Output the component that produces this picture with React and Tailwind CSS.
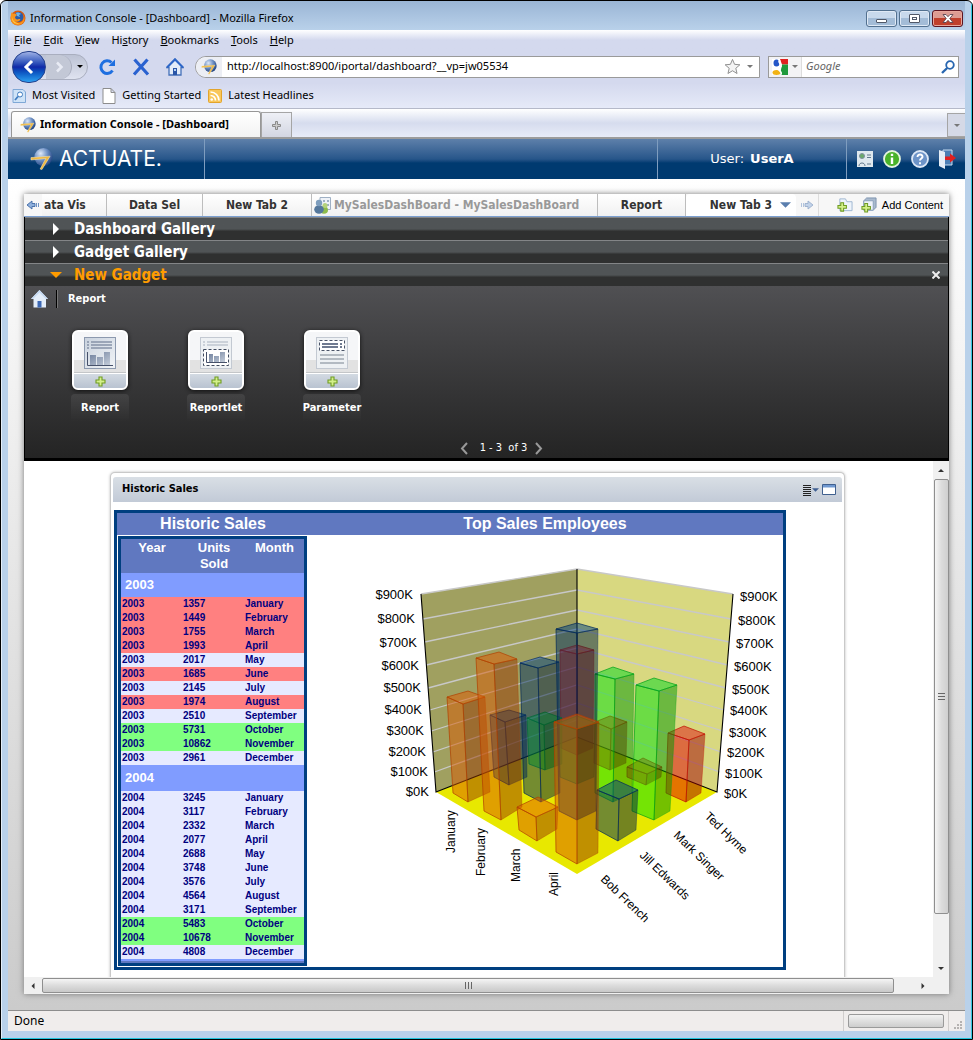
import React, { useState } from "react";

const CHROME_FONT = "font-['Noto_Sans',sans-serif]";
const APP_FONT = "font-['DejaVu_Sans_Condensed','DejaVu_Sans',sans-serif]";

const LOW = "bg-[#ff8080]";
const HIGH = "bg-[#80ff80]";
const NORMAL = "bg-[#e6eaff]";

const SALES = [
  {
    year: 2003,
    height: "h-[24px]",
    rows: [
      [1357, "January"],
      [1449, "February"],
      [1755, "March"],
      [1993, "April"],
      [2017, "May"],
      [1685, "June"],
      [2145, "July"],
      [1974, "August"],
      [2510, "September"],
      [5731, "October"],
      [10862, "November"],
      [2961, "December"],
    ],
  },
  {
    year: 2004,
    height: "h-[26px]",
    rows: [
      [3245, "January"],
      [3117, "February"],
      [2332, "March"],
      [2077, "April"],
      [2688, "May"],
      [3748, "June"],
      [3576, "July"],
      [4564, "August"],
      [3171, "September"],
      [5483, "October"],
      [10678, "November"],
      [4808, "December"],
    ],
  },
];

const rowColor = (units) => {
  if (units < 2000) return LOW;
  if (units > 5000) return HIGH;
  return NORMAL;
};

const PALETTE = {
  red: { left: "#e00000", right: "#a00000", top: "#e01010", line: "#c01000" },
  green: { left: "#00e00a", right: "#009800", top: "#00d820", line: "#00a018" },
  blue: { left: "#003060", right: "#002040", top: "#004080", line: "#002858" },
  orange: { left: "#d85800", right: "#983800", top: "#e05800", line: "#b04000" },
};

// Corners of each column: left, back, right and front of the lid,
// then left, front and right of the base. Ordered from back to front.
const COLUMNS = [
  ["red", 560, 650, 577, 645, 594, 650, 577, 654, 561, 748, 577, 755, 593, 748],
  ["red", 595, 722, 610, 716, 627, 722, 611, 729, 594, 763, 610, 770, 626, 763],
  ["red", 627, 767, 643, 758, 662, 767, 647, 774, 627, 777, 646, 785, 661, 777],
  ["red", 668, 733, 684, 726, 705, 734, 689, 740, 666, 793, 686, 802, 701, 793],
  ["green", 527, 718, 545, 712, 562, 718, 544, 725, 529, 764, 545, 770, 562, 764],
  ["green", 558, 723, 577, 716, 596, 723, 577, 730, 560, 777, 577, 784, 594, 777],
  ["green", 595, 674, 613, 667, 634, 674, 615, 679, 595, 793, 613, 802, 632, 793],
  ["green", 636, 685, 654, 678, 677, 685, 659, 691, 632, 811, 654, 820, 670, 811],
  ["blue", 490, 715, 509, 710, 526, 715, 505, 722, 494, 777, 509, 785, 527, 777],
  ["blue", 520, 663, 540, 657, 559, 662, 538, 668, 524, 793, 541, 802, 560, 793],
  ["blue", 556, 629, 577, 623, 598, 629, 577, 633, 559, 811, 577, 820, 596, 811],
  ["blue", 597, 790, 616, 780, 638, 790, 619, 799, 596, 829, 618, 841, 636, 830],
  ["orange", 447, 697, 468, 691, 485, 697, 463, 704, 453, 793, 468, 802, 490, 792],
  ["orange", 476, 658, 499, 652, 517, 659, 494, 664, 484, 811, 501, 820, 522, 807],
  ["orange", 517, 807, 538, 797, 558, 807, 536, 817, 519, 830, 537, 841, 557, 829],
  ["orange", 554, 722, 577, 714, 599, 722, 577, 729, 556, 852, 577, 864, 598, 853],
];

// value, left edge y, corner y, left label x/y, right label x/y
const SCALE = [
  ["$900K", 594, 569, 413, 599, 740, 601],
  ["$800K", 619, 590, 415, 623, 738, 625],
  ["$700K", 642, 610, 417, 647, 736, 648],
  ["$600K", 665, 629, 419, 670, 734, 671],
  ["$500K", 688, 648, 421, 692, 732, 694],
  ["$400K", 710, 667, 422, 714, 730, 715],
  ["$300K", 731, 685, 424, 735, 729, 737],
  ["$200K", 752, 703, 426, 756, 727, 757],
  ["$100K", 772, 720, 428, 776, 725, 778],
  ["$0K", 792, 737, 429, 796, 724, 798],
];

const MONTHS = [
  ["January", 455, 853],
  ["February", 485, 876],
  ["March", 520, 882],
  ["April", 558, 896],
];

const PEOPLE = [
  ["Ted Hyme", 704, 817],
  ["Mark Singer", 673, 836],
  ["Jill Edwards", 639, 856],
  ["Bob French", 600, 880],
];

const Column = ({ data }) => {
  const [name, ...p] = data;
  const c = PALETTE[name];
  const at = (i) => `${p[i * 2]},${p[i * 2 + 1]}`;
  return (
    <g stroke={c.line} strokeOpacity="0.7" strokeLinejoin="round" fillOpacity="0.5">
      <polygon points={`${at(0)} ${at(3)} ${at(5)} ${at(4)}`} fill={c.left} />
      <polygon points={`${at(3)} ${at(2)} ${at(6)} ${at(5)}`} fill={c.right} strokeOpacity="0.35" />
      <polygon points={`${at(0)} ${at(1)} ${at(2)} ${at(3)}`} fill={c.top} />
    </g>
  );
};

const SalesChart = () => (
  <svg
    viewBox="307 536 476 431"
    className="block h-[431px] w-[476px] shrink-0"
    role="img"
    aria-label="Top Sales Employees"
    fontFamily="Liberation Sans, Arial, sans-serif"
  >
    <polygon points="421,594 577,569 577,737 436,792" fill="#a0a060" />
    <polygon points="577,569 733,594 717,792 577,737" fill="#d8d880" />
    <polygon points="436,792 577,737 717,792 577,874" fill="#e8e800" />
    {SCALE.map(([label, y, cy], i) => {
      const dx = ((y - 594) / 198) * 15;
      return (
        label !== "$0K" && (
          <polyline
            key={i}
            points={`${421 + dx},${y} 577,${cy} ${733 - dx},${y}`}
            fill="none"
            stroke="#c8c8c8"
            strokeWidth="1.3"
          />
        )
      );
    })}
    <path d="M421 594 436 792 577 737 717 792 733 594M577 569V737" fill="none" stroke="#000" strokeWidth="1.1" />
    {COLUMNS.map((col, i) => (
      <Column key={i} data={col} />
    ))}
    <g fontSize="13">
      {SCALE.map(([label, , , lx, ly, rx, ry]) => (
        <g key={label}>
          <text x={lx} y={ly} textAnchor="end">{label}</text>
          <text x={rx} y={ry}>{label}</text>
        </g>
      ))}
    </g>
    <g fontSize="12">
      {PEOPLE.map(([label, x, y]) => (
        <text key={label} transform={`translate(${x} ${y}) rotate(44)`}>{label}</text>
      ))}
      {MONTHS.map(([label, x, y]) => (
        <text key={label} transform={`translate(${x} ${y}) rotate(-90)`}>{label}</text>
      ))}
    </g>
  </svg>
);

const SalesTable = () => (
  <table className="w-[189px] shrink-0 table-fixed border-separate border-spacing-0 border-[3px] border-[#003f80] text-left font-bold">
    <colgroup>
      <col className="w-[62px]" />
      <col className="w-[62px]" />
      <col />
    </colgroup>
    <thead>
      <tr className="h-[34px] bg-[#6078c0] text-center align-top text-[13px] leading-[16px] text-white">
        <th className="p-0 pt-px">Year</th>
        <th className="p-0 pt-px">Units<br />Sold</th>
        <th className="p-0 pt-px">Month</th>
      </tr>
    </thead>
    {SALES.map((group) => (
      <tbody key={group.year} className="text-[10px] leading-[14px] text-[#000080]">
        <tr className={`${group.height} bg-[#809cff] text-[13px] text-white`}>
          <td colSpan={3} className="p-0 pl-1">{group.year}</td>
        </tr>
        {group.rows.map(([units, month]) => (
          <tr key={month} className={`h-[14px] ${rowColor(units)}`}>
            <td className="p-0 pl-px">{group.year}</td>
            <td className="p-0">{units}</td>
            <td className="p-0">{month}</td>
          </tr>
        ))}
      </tbody>
    ))}
    <tfoot>
      <tr className="h-[4px]">
        <td colSpan={3} className="border-b-2 border-[#6078c0] bg-[#809cff] p-0" />
      </tr>
    </tfoot>
  </table>
);

const Globe = ({ className }) => (
  <svg viewBox="0 0 24 24" className={className} aria-hidden="true">
    <defs>
      <radialGradient id="globe" cx="0.35" cy="0.3" r="0.75">
        <stop offset="0" stopColor="#dfe9f8" />
        <stop offset="0.5" stopColor="#6d8fc4" />
        <stop offset="1" stopColor="#1d3f7c" />
      </radialGradient>
    </defs>
    <circle cx="14" cy="10" r="9.5" fill="url(#globe)" />
    <path d="M1 10.500 21 9 12.500 23 10.500 22.500 16.500 11.500 1 13z" fill="#f0b840" stroke="#fff3c8" strokeWidth="0.500" />
  </svg>
);

const FirefoxIcon = () => (
  <svg viewBox="0 0 16 16" className="h-4 w-4" aria-hidden="true">
    <circle cx="8" cy="8" r="7.500" fill="#d9580d" />
    <circle cx="8.500" cy="7" r="5" fill="#2d5da8" />
    <path d="M6 3c2-1 4 0 5 1l-2 1 1 2-3-1z" fill="#6fb4e8" />
    <path d="M1 4c0-1 1-2 1-2l1 2c2-1 3 0 4 1L5 7c0 2 2 3 4 2 1 0 2 0 1 1-1 2-4 2-5 1 2 3 7 2 8-1 1-2 1-4 0-6 3 4 2 11-5 11S0 10 1 4z" fill="#f7941e" />
    <path d="M2 6c0 5 4 8 8 7-3 2-9 0-8-7z" fill="#ffd24a" />
  </svg>
);

const Caret = ({ className }) => (
  <svg viewBox="0 0 8 4" className={className} aria-hidden="true">
    <path d="M0 0H8L4 4z" fill="currentColor" />
  </svg>
);

const Plus = () => (
  <path d="M4 1H7V4H10V7H7V10H4V7H1V4H4z" fill="#d4f08a" stroke="#6f9c22" strokeWidth="1.100" />
);

const HomeIcon = ({ className }) => (
  <svg viewBox="0 0 18 18" className={className} aria-hidden="true">
    <path d="M9 1 17 9.500H15V17H3V9.500H1z" fill="#e4edf9" stroke="#4470b8" strokeWidth="1.300" />
    <path d="M1 9.500 9 1.500 17 9.500" fill="none" stroke="#2c66c8" strokeWidth="2" />
    <path d="M7 10h4v7H7z" fill="#2a56a8" />
    <path d="M8 11h2v2H8z" fill="#b9d4f4" />
  </svg>
);

const TitleBar = () => (
  <header className="flex h-[29px] shrink-0 items-center bg-linear-to-b from-[#9ab5d5] to-[#b9d1ea] pt-[5px] pr-[2px] pl-[2px]">
    <div className="flex items-center gap-1">
      <FirefoxIcon />
      <h1 className="text-[11px]">Information Console - [Dashboard] - Mozilla Firefox</h1>
    </div>
    <div className="ml-auto flex gap-[2px]">
      <button aria-label="Minimize" className="flex h-[17px] w-[31px] items-center justify-center rounded-[3px] border border-[#52708f] bg-linear-to-b from-[#c8d9ec] from-50% to-[#a3bcd7] to-50% shadow-[inset_0_0_0_1px_#dfe9f5]">
        <span className="mt-[5px] h-[4px] w-[11px] rounded-[1px] border border-[#505868] bg-white" />
      </button>
      <button aria-label="Maximize" className="flex h-[17px] w-[31px] items-center justify-center rounded-[3px] border border-[#52708f] bg-linear-to-b from-[#c8d9ec] from-50% to-[#a3bcd7] to-50% shadow-[inset_0_0_0_1px_#dfe9f5]">
        <span className="flex h-[9px] w-[11px] items-center justify-center rounded-[1px] border border-[#505868] bg-white">
          <span className="h-[3px] w-[5px] border border-[#505868]" />
        </span>
      </button>
      <button aria-label="Close" className="flex h-[17px] w-[31px] items-center justify-center rounded-[3px] border border-[#5c1522] bg-linear-to-b from-[#dd9c93] from-50% to-[#c0402c] to-50% shadow-[inset_0_0_0_1px_#e8a79c]">
        <svg viewBox="0 0 12 9" className="h-[9px] w-[12px]" aria-hidden="true">
          <path d="M1 .5H4L6 2.700 8 .5h3L7.800 4.500 11 8.500H8L6 6.300 4 8.500H1L4.200 4.500z" fill="#fff" stroke="#5a4550" strokeWidth="0.900" />
        </svg>
      </button>
    </div>
  </header>
);

const MENU = [
  ["", "F", "ile"],
  ["", "E", "dit"],
  ["", "V", "iew"],
  ["Hi", "s", "tory"],
  ["", "B", "ookmarks"],
  ["", "T", "ools"],
  ["", "H", "elp"],
];

const MenuBar = () => (
  <nav className="flex h-[20px] items-center gap-3 bg-linear-to-b from-white to-[#d4d9ee] to-50% pl-[6px] text-[11px]">
    {MENU.map(([pre, key, post]) => (
      <button key={key + post}>
        {pre}
        <u>{key}</u>
        {post}
      </button>
    ))}
  </nav>
);

const NavBar = () => {
  const [url, setUrl] = useState("http://localhost:8900/iportal/dashboard?__vp=jw05534");

  return (
    <div className="flex h-[33px] items-center pr-[6px] pl-[4px]">
      <div className="flex h-[26px] w-[76px] items-center rounded-full border border-[#a9aebf] bg-linear-to-b from-[#bcc2d4] to-[#dfe3f0]">
        <button aria-label="Back" className="-ml-px flex h-[32px] w-[34px] shrink-0 items-center justify-center rounded-full border border-[#24408c] bg-linear-to-b from-[#9fb0e4] via-[#1027a8] to-[#2fa0f0]">
          <svg viewBox="0 0 16 16" className="h-4 w-4" aria-hidden="true">
            <path d="M11 2 5 8l6 6" fill="none" stroke="#fff" strokeWidth="3" />
          </svg>
        </button>
        <button aria-label="Forward" className="flex h-[24px] w-[26px] items-center justify-center rounded-r-xl border-r border-[#a9aebf] bg-[#c3c8d6]">
          <svg viewBox="0 0 12 12" className="h-[12px] w-[12px]" aria-hidden="true">
            <path d="M4 1.500 8.500 6 4 10.500" fill="none" stroke="#e8ebf4" strokeWidth="2.500" />
          </svg>
        </button>
        <button aria-label="Recent pages" className="flex h-full flex-1 items-center justify-center">
          <Caret className="h-[3px] w-[6px] text-black" />
        </button>
      </div>
      <div className="ml-[10px] flex items-center gap-[16px]">
        <button aria-label="Reload">
          <svg viewBox="0 0 18 18" className="h-[18px] w-[18px]" aria-hidden="true">
            <path d="M14.500 12.500A6.300 6.300 0 1 1 13.500 4.500" fill="none" stroke="#1e6fe0" strokeWidth="3" />
            <path d="M17 1.500V8H10.500z" fill="#1e6fe0" />
          </svg>
        </button>
        <button aria-label="Stop">
          <svg viewBox="0 0 18 18" className="h-[18px] w-[18px]" aria-hidden="true">
            <path d="M2.500 1.500 16 16.500M15.500 1.500 2 16.500" stroke="#2a62d0" strokeWidth="3.200" />
          </svg>
        </button>
        <button aria-label="Home">
          <HomeIcon className="h-[18px] w-[18px]" />
        </button>
      </div>
      <div className="ml-[11px] flex h-[22px] flex-1 items-center rounded-l-full border border-[#9a9a9a] bg-white">
        <span className="flex h-full w-[26px] items-center justify-center rounded-l-full bg-[#eceef4]">
          <Globe className="h-[16px] w-[16px]" />
        </span>
        <input
          aria-label="Location"
          value={url}
          onChange={(e) => setUrl(e.target.value)}
          className="min-w-0 flex-1 pl-[5px] text-[11px] outline-none"
        />
        <button aria-label="Bookmark this page">
          <svg viewBox="0 0 18 18" className="h-[17px] w-[17px]" aria-hidden="true">
            <path d="M9 1.500 11.200 6.700 16.800 7.200 12.500 10.900 13.800 16.400 9 13.500 4.200 16.400 5.500 10.900 1.200 7.200 6.800 6.700z" fill="#f4f4f4" stroke="#8a8a8a" />
          </svg>
        </button>
        <button aria-label="Show history" className="flex w-[18px] justify-center">
          <Caret className="h-[3px] w-[6px] text-[#777]" />
        </button>
      </div>
      <div className="ml-[8px] flex h-[22px] w-[191px] items-center border border-[#9a9a9a] bg-white">
        <button aria-label="Search engine" className="flex h-full w-[33px] items-center gap-1 border-r border-[#ddd] bg-[#f3f3f5] pl-[3px]">
          <svg viewBox="0 0 16 16" className="h-4 w-4" aria-hidden="true">
            <path d="M0 0h16v16H0z" fill="#fff" />
            <path d="M8 0h8v5.500H10z" fill="#e02020" />
            <path d="M10 5.500h6V16H8z" fill="#1e9a3c" />
            <ellipse cx="4.500" cy="4" rx="3" ry="3.500" fill="#2456c8" />
            <ellipse cx="4.500" cy="13.500" rx="4" ry="2.500" fill="#f2b314" />
            <path d="M8 1C5 3 10 5 9 7.500S5 9 7 11s3 3 1.500 5" stroke="#fff" strokeWidth="1.600" fill="none" />
          </svg>
          <Caret className="h-[3px] w-[6px] text-[#777]" />
        </button>
        <input
          aria-label="Search"
          placeholder="Google"
          className="min-w-0 flex-1 pl-[4px] text-[11px] italic outline-none placeholder:text-[#666]"
        />
        <button aria-label="Go" className="pr-[3px]">
          <svg viewBox="0 0 14 14" className="h-[14px] w-[14px]" aria-hidden="true">
            <circle cx="9" cy="5" r="3.800" fill="#fff" stroke="#2866b0" strokeWidth="1.800" />
            <path d="M6.200 8 1 13" stroke="#2866b0" strokeWidth="2.400" />
          </svg>
        </button>
      </div>
    </div>
  );
};

const Bookmarks = () => (
  <div className="flex h-[26px] items-center gap-[7px] border-b border-[#b5b9c9] bg-linear-to-b from-[#d4d9ee] to-[#e6eaf8] pl-[4px] text-[11px]">
    <a href="#most" className="flex items-center gap-[6px]">
      <svg viewBox="0 0 14 14" className="h-[14px] w-[14px]" aria-hidden="true">
        <path d="M1 .5H11L13.500 3V13.500H1z" fill="#cfe3f7" stroke="#7fa8d6" />
        <circle cx="8" cy="5.500" r="2.500" fill="#fff" stroke="#3f7cc0" />
        <path d="M6 7.500 3 11" stroke="#3f7cc0" strokeWidth="1.800" />
      </svg>
      Most Visited
    </a>
    <a href="#start" className="flex items-center gap-[6px]">
      <svg viewBox="0 0 14 16" className="h-[16px] w-[14px]" aria-hidden="true">
        <path d="M1 .5H9L13 4.500V15.500H1zM9 .5V4.500H13" fill="#fff" stroke="#8d8d8d" />
      </svg>
      Getting Started
    </a>
    <a href="#news" className="flex items-center gap-[6px]">
      <svg viewBox="0 0 14 14" className="h-[14px] w-[14px]" aria-hidden="true">
        <rect x="0.5" y="0.5" width="13" height="13" rx="1" fill="#f9c75a" stroke="#e2a42c" />
        <circle cx="3.700" cy="10.500" r="1.300" fill="#fff" />
        <path d="M2.500 6.500a5 5 0 0 1 5 5M2.500 3a8.500 8.500 0 0 1 8.500 8.500" fill="none" stroke="#fff" strokeWidth="1.700" />
      </svg>
      Latest Headlines
    </a>
  </div>
);

const BrowserTabs = () => (
  <div className="flex h-[30px] items-end border-b-2 border-[#9c9c9c] bg-linear-to-b from-white via-[#d6dcee] to-[#e8ecf8] pl-[3px]">
    <button className="flex h-[26px] w-[250px] items-center gap-1 rounded-t-[3px] border border-b-0 border-[#979797] bg-linear-to-b from-white to-[#f2f2f2] pl-[8px] text-[11px] font-bold">
      <Globe className="h-[16px] w-[16px]" />
      Information Console - [Dashboard]
    </button>
    <button aria-label="Open a new tab" className="flex h-[25px] w-[31px] items-center justify-center border border-b-0 border-[#a5a5a5] bg-linear-to-b from-[#eef0f6] to-[#d3d6e2]">
      <svg viewBox="0 0 9 9" className="h-[9px] w-[9px]" aria-hidden="true">
        <path d="M3.500.5h2v3h3v2h-3v3h-2v-3h-3v-2h3z" fill="#ccc" stroke="#8a8a8a" />
      </svg>
    </button>
    <button aria-label="List all tabs" className="ml-auto flex h-[24px] w-[18px] items-center justify-center border border-r-0 border-[#a5a5a5] bg-[#d5d9e6]">
      <Caret className="h-[3px] w-[6px] text-[#777]" />
    </button>
  </div>
);

const AppHeader = () => (
  <header className="flex h-[40px] shrink-0 bg-linear-to-b from-[#5e80aa] via-[#27568a] via-50% to-[#003a70] to-60% text-[13px] text-white">
    <div className="flex w-[197px] items-center gap-[6px] border-r border-[#7f9dbf] pl-[22px]">
      <Globe className="h-[26px] w-[23px]" />
      <span className="font-['Inter',sans-serif] text-[21px]">ACTUATE.</span>
    </div>
    <div className="flex-1" />
    <div className="flex w-[190px] items-center justify-center gap-[6px] border-x border-[#7f9dbf] font-['DejaVu_Sans',sans-serif]">
      <span>User:</span>
      <b>UserA</b>
    </div>
    <div className="flex w-[118px] items-center justify-between pr-[9px] pl-[10px]">
      <button aria-label="Profile">
        <svg viewBox="0 0 16 16" className="h-[16px] w-[16px]" aria-hidden="true">
          <path d="M0 0h16v16H0z" fill="#dfe8ee" />
          <circle cx="5" cy="5" r="2.500" fill="#6aa86a" stroke="#8090a0" />
          <path d="M10 4h4M10 6.500h4M2 15c0-4 6-4 6 0M10 13h4" stroke="#62788c" fill="none" />
        </svg>
      </button>
      <button aria-label="Information">
        <svg viewBox="0 0 18 18" className="h-[18px] w-[18px]" aria-hidden="true">
          <circle cx="9" cy="9" r="8" fill="#49b22a" stroke="#e4f4de" strokeWidth="1.800" />
          <path d="M9 7.500V14M9 3.800v2.200" stroke="#fff" strokeWidth="2.400" fill="none" />
        </svg>
      </button>
      <button aria-label="Help">
        <svg viewBox="0 0 18 18" className="h-[18px] w-[18px]" aria-hidden="true">
          <circle cx="9" cy="9" r="8" fill="#6d94c8" stroke="#dde8f6" strokeWidth="1.800" />
          <path d="M6.500 7c0-3.500 5.500-3 5 0-.2 1.500-2.500 1.500-2.500 3.500M9 12.300v2" stroke="#fff" strokeWidth="1.900" fill="none" />
        </svg>
      </button>
      <button aria-label="Log out">
        <svg viewBox="0 0 17 20" className="h-[20px] w-[17px]" aria-hidden="true">
          <path d="M4 1h9v15H4z" fill="#4d7fb4" stroke="#c7dcf0" />
          <path d="M0 1 6 3V20L0 17z" fill="#e6eef6" />
          <path d="M6 7.500h5V4.500L17 9l-6 4.500V11H6z" fill="#e02020" />
        </svg>
      </button>
    </div>
  </header>
);

const BlockArrow = ({ className }) => (
  <svg viewBox="0 0 14 10" className={className} aria-hidden="true">
    <path d="M6 3.500V1L1 5l5 4V6.500h3v-3z" fill="#8fb0dc" stroke="#3f69a4" strokeWidth="0.900" />
    <path d="M10.500 3v4M12.500 3v4" stroke="#6f92c4" />
  </svg>
);

const TAB_CLASS = "flex items-center border-r border-[#bdbdbd] bg-linear-to-b from-white to-[#f1f1f1] whitespace-nowrap";

const DashboardTabs = () => (
  <div className="flex h-[23px] shrink-0 border-b border-[#7b9fd0] bg-[#f7f7f7] text-[12px] font-bold text-[#333]">
    <button aria-label="Scroll tabs left" className="flex w-[18px] items-center justify-center">
      <BlockArrow className="h-[10px] w-[14px]" />
    </button>
    <button className={`${TAB_CLASS} w-[65px] overflow-hidden pl-[2px]`}>ata Vis</button>
    <button className={`${TAB_CLASS} w-[96px] justify-center`}>Data Sel</button>
    <button className={`${TAB_CLASS} w-[109px] justify-center`}>New Tab 2</button>
    <button className={`${TAB_CLASS} w-[286px] gap-[3px] pl-[2px] text-[#999]`}>
      <svg viewBox="0 0 17 17" className="h-[17px] w-[17px]" aria-hidden="true">
        <path d="M6 .5h10.500v12H6z" fill="#eef2f8" stroke="#9fb0c4" />
        <path d="M9 3h2v2H9zM13 3h2v2h-2zM13 7h2v2h-2z" fill="#9fb0c4" />
        <ellipse cx="10" cy="13" rx="4" ry="3.800" fill="#8dbb4a" />
        <circle cx="11" cy="8.500" r="2.500" fill="#b5d27c" />
        <ellipse cx="5" cy="12.500" rx="4.800" ry="4.200" fill="#55789c" />
        <circle cx="5" cy="6" r="3.200" fill="#7d9dbd" />
      </svg>
      MySalesDashBoard - MySalesDashBoard
    </button>
    <button className={`${TAB_CLASS} w-[88px] justify-center`}>Report</button>
    <button className="flex w-[110px] items-center justify-end gap-2 rounded-t-[4px] bg-white pr-[5px] whitespace-nowrap">
      New Tab 3
      <Caret className="h-[6px] w-[11px] text-[#5b7fae]" />
    </button>
    <button aria-label="Scroll tabs right" className="flex w-[23px] items-center justify-center border-r border-[#ddd]">
      <BlockArrow className="h-[10px] w-[14px] rotate-180 opacity-50" />
    </button>
    <div className="flex flex-1 items-center justify-end gap-2 pr-[6px] font-normal text-black">
      <button aria-label="Add tab">
        <svg viewBox="0 0 17 17" className="h-[16px] w-[16px]" aria-hidden="true">
          <path d="M3 2h6l1.500 3h5.500v9.500H3z" fill="#eef4fb" stroke="#9db4d0" />
          <g transform="translate(0 5)"><Plus /></g>
        </svg>
      </button>
      <button className="flex items-center gap-[5px] font-['Liberation_Sans',Arial,sans-serif] text-[11px]">
        <svg viewBox="0 0 17 17" className="h-[16px] w-[16px]" aria-hidden="true">
          <path d="M3 4 6 1h10v10l-3 3H3z" fill="#a9bace" stroke="#7d92ae" />
          <path d="M3 4h10v10H3z" fill="#eef3f9" stroke="#8ba0bb" />
          <g transform="translate(0 6)"><Plus /></g>
        </svg>
        Add Content
      </button>
    </div>
  </div>
);

const GalleryRow = ({ title, open, onClick }) => (
  <div className="flex h-[23px] items-center border-t border-[#838587] bg-linear-to-b from-[#505456] from-50% to-[#2f3030] to-60% pr-[8px] pl-[25px]">
    <button onClick={onClick} aria-expanded={open} className={`flex items-center text-[15px] font-bold ${open ? "text-[#ff9c00]" : "text-white"}`}>
      <span className="flex w-[24px] justify-start">
        <svg viewBox="0 0 12 12" className="h-[12px] w-[12px]" aria-hidden="true">
          <path d={open ? "M0 3H12L6 9z" : "M3 0 9 6 3 12z"} fill="currentColor" />
        </svg>
      </span>
      {title}
    </button>
    {open && (
      <button aria-label="Close" className="ml-auto">
        <svg viewBox="0 0 8 8" className="block h-[8px] w-[8px]" aria-hidden="true">
          <path d="M0.500 0.500 7.500 7.500M7.500 0.500 0.500 7.500" stroke="#eee" strokeWidth="2" />
        </svg>
      </button>
    )}
  </div>
);

const ReportArt = ({ kind }) => (
  <svg viewBox="0 0 32 32" className="h-8 w-8" aria-hidden="true">
    <defs>
      <linearGradient id="paper" x1="0" y1="0" x2="1" y2="1">
        <stop offset="0" stopColor="#c9d2de" />
        <stop offset="1" stopColor="#f1f4f7" />
      </linearGradient>
      <linearGradient id="bar" x1="0" y1="0" x2="1" y2="1">
        <stop offset="0" stopColor="#6e7f9c" />
        <stop offset="1" stopColor="#c3ccd9" />
      </linearGradient>
    </defs>
    <rect x="0.5" y="0.5" width="31" height="31" fill={kind === "Report" ? "url(#paper)" : "#eef1f4"} stroke={kind === "Report" ? "#8c99ae" : "#c3c9d2"} />
    {kind === "Parameter" && (
      <>
        <path d="M3.500 3.500h25v10h-25z" fill="#fff" stroke="#4a5468" strokeDasharray="3 2" />
        <path d="M6 7h16M6 10h16" stroke="#6f7a90" strokeWidth="2" />
        <path d="M24 7h2M24 10h2" stroke="#6f7a90" strokeWidth="2" />
        <path d="M4 18h24M4 22h24M4 26h24" stroke="#b3bac2" strokeWidth="2" />
      </>
    )}
    {kind === "Report" && (
      <>
        <path d="M3 5h2M3 8h2M3 11h2M7 5h21M7 8h21M7 11h21" stroke="#8793a8" strokeWidth="1.500" />
        <path d="M6 18h6v10H6zM13 20h6v8h-6zM20 15h6v13h-6z" fill="url(#bar)" />
        <path d="M3.500 15V28.500H29" fill="none" stroke="#46516a" />
      </>
    )}
    {kind === "Reportlet" && (
      <>
        <path d="M3 5h2M3 8h2M7 5h21M7 8h21" stroke="#c0c6cf" strokeWidth="1.500" />
        <path d="M3.500 12.500h25v16h-25z" fill="#fff" stroke="#3f4a5e" strokeDasharray="3 2" />
        <path d="M9 17h4v8H9zM14 19h5v6h-5zM20 15h5v10h-5z" fill="url(#bar)" />
        <path d="M6.500 15V25.500H27" fill="none" stroke="#46516a" />
      </>
    )}
  </svg>
);

const GadgetCard = ({ name }) => (
  <button className="flex w-[56px] flex-col items-center text-[11px] font-bold text-white">
    <span className="flex h-[60px] w-[56px] flex-col overflow-hidden rounded-[6px] border-2 border-white bg-linear-to-b from-[#f5f6f8] from-50% to-[#e2e2e2] to-50% shadow-[0_1px_4px_#111]">
      <span className="flex h-[41px] items-center justify-center">
        <ReportArt kind={name} />
      </span>
      <span className="flex flex-1 items-center justify-center border-t border-white bg-linear-to-b from-[#d3dae2] to-[#b9c3d1] outline-1 outline-[#c4c6c8]">
        <svg viewBox="0 0 11 11" className="h-[11px] w-[11px]" aria-hidden="true"><Plus /></svg>
      </span>
    </span>
    <span className="mt-[4px] flex h-[28px] w-[58px] items-center justify-center rounded-t-[4px] bg-linear-to-b from-white/8 to-transparent">
      {name}
    </span>
  </button>
);

const Gallery = () => {
  const [open, setOpen] = useState("New Gadget");

  return (
    <section className="shrink-0 border-x border-b-[3px] border-black bg-[#252525]">
      {["Dashboard Gallery", "Gadget Gallery", "New Gadget"].map((title) => (
        <GalleryRow key={title} title={title} open={open === title} onClick={() => setOpen(title)} />
      ))}
      <div className="bg-linear-to-b from-[#505053] to-[#242424] text-[11px] text-white">
        <div className="flex h-[26px] items-center font-bold">
          <button aria-label="Gallery home" className="ml-[6px]">
            <svg viewBox="0 0 17 18" className="block h-[18px] w-[17px]" aria-hidden="true">
              <path d="M8.500 0 17 9H15V17.500H2.500V9H0z" fill="#e3edf9" />
              <path d="M0 9 8.500 0 17 9H15L8.500 2.500 2 9z" fill="#c4d8f0" />
              <path d="M6.500 11h4v6.500h-4z" fill="#3c68b4" />
            </svg>
          </button>
          <span className="mr-[10px] ml-[8px] h-[18px] w-[2px] border-l border-black bg-[#777]" />
          Report
        </div>
        <div className="flex gap-[60px] pt-[18px] pl-[47px]">
          <GadgetCard name="Report" />
          <GadgetCard name="Reportlet" />
          <GadgetCard name="Parameter" />
        </div>
        <div className="flex h-[36px] items-center justify-center gap-3 pt-[16px] pl-[30px]">
          <button aria-label="Previous">
            <svg viewBox="0 0 8 13" className="block h-[13px] w-[8px]" aria-hidden="true"><path d="M7 1 2 6.500 7 12" fill="none" stroke="#999" strokeWidth="2" /></svg>
          </button>
          <span>1 - 3&nbsp; of 3</span>
          <button aria-label="Next" className="-ml-1">
            <svg viewBox="0 0 8 13" className="block h-[13px] w-[8px]" aria-hidden="true"><path d="M1 1 6 6.500 1 12" fill="none" stroke="#999" strokeWidth="2" /></svg>
          </button>
        </div>
      </div>
    </section>
  );
};

const Gadget = () => (
  <section className="rounded-t-[5px] border border-b-0 border-[#c9c9c9] bg-white px-[2px] pt-[4px] pb-6 shadow-[0_0_3px_#bbb]">
    <div className="flex h-[25px] items-center rounded-t-[3px] bg-linear-to-b from-[#d9dfe5] to-[#c2cad7] pr-[6px] pl-[9px]">
      <h2 className="text-[11px] font-bold">Historic Sales</h2>
      <button aria-label="Gadget menu" className="ml-auto flex items-center">
        <svg viewBox="0 0 9 12" className="h-[12px] w-[9px]" aria-hidden="true">
          <path d="M0 1.500h8M0 3.500h8M0 5.500h8M0 7.500h8M0 9.500h8M0 11.500h8" stroke="#222" />
        </svg>
        <Caret className="h-[4px] w-[7px] text-[#3f5f92]" />
      </button>
      <button aria-label="Maximize gadget" className="ml-[3px]">
        <svg viewBox="0 0 14 11" className="h-[11px] w-[14px]" aria-hidden="true">
          <path d="M.5.5h13v10H.5z" fill="#fff" stroke="#40608f" />
          <path d="M1 1h12v2.500H1z" fill="#6f98d0" />
        </svg>
      </button>
    </div>
    <div className="mt-[8px] ml-px w-[672px] border-[3px] border-[#003f80] font-['Liberation_Sans',Arial,sans-serif]">
      <div className="flex h-[22px] items-center bg-[#6078c0] text-center text-[16px] font-bold text-white">
        <h3 className="w-[190px] pl-[2px]">Historic Sales</h3>
        <h3 className="flex-1">Top Sales Employees</h3>
      </div>
      <div className="flex items-start pt-px pl-px">
        <SalesTable />
        <SalesChart />
      </div>
    </div>
  </section>
);

const Arrow = ({ d }) => (
  <svg viewBox="0 0 8 8" className="h-[8px] w-[8px]" aria-hidden="true">
    <path d={d} fill="#333" />
  </svg>
);

const Workspace = () => (
  <div className="flex min-h-0 flex-1 flex-col bg-white">
    <div className="flex min-h-0 flex-1">
      <div className="min-w-0 flex-1 overflow-hidden pt-[11px] pr-[88px] pl-[86px]">
        <Gadget />
      </div>
      <div className="flex w-[16px] flex-col items-center bg-[#f0f0f0]">
        <button aria-label="Scroll up" className="flex h-[18px] items-center justify-center"><Arrow d="M1 6 4 3 7 6z" /></button>
        <div className="flex h-[435px] w-[15px] items-center justify-center rounded-[2px] border border-[#8f8f8f] bg-linear-to-r from-[#f5f5f5] via-[#dcdcdc] to-[#cfcfcf]">
          <span className="h-[7px] w-[7px] bg-[repeating-linear-gradient(to_bottom,#666_0_1px,transparent_1px_3px)]" />
        </div>
        <button aria-label="Scroll down" className="mt-auto flex h-[18px] items-center justify-center"><Arrow d="M1 3H7L4 6z" /></button>
      </div>
    </div>
    <div className="flex h-[17px] shrink-0 items-center bg-[#f0f0f0] pr-[17px]">
      <button aria-label="Scroll left" className="flex w-[18px] items-center justify-center"><Arrow d="M5.500 1V7L2.500 4z" /></button>
      <div className="flex h-[15px] w-[852px] items-center justify-center rounded-[2px] border border-[#8f8f8f] bg-linear-to-b from-[#f5f5f5] via-[#dcdcdc] to-[#c8c8c8]">
        <span className="h-[7px] w-[7px] bg-[repeating-linear-gradient(to_right,#666_0_1px,transparent_1px_3px)]" />
      </div>
      <button aria-label="Scroll right" className="ml-auto flex w-[18px] items-center justify-center"><Arrow d="M2.500 1V7L5.500 4z" /></button>
    </div>
  </div>
);

const StatusBar = () => (
  <footer className="flex h-[21px] shrink-0 items-center border-t border-[#8d8d8d] bg-[#f0edec] text-[12px]">
    <span className="flex-1 pl-[6px]">Done</span>
    <span className="flex h-full w-[106px] items-center justify-center border-x border-[#d0cdcc]">
      <span className="h-[14px] w-[96px] rounded-[2px] border border-[#9a9a9a] bg-linear-to-b from-[#f2f2f2] to-[#cdcdcd]" />
    </span>
    <svg viewBox="0 0 16 20" className="h-[20px] w-[16px]" aria-hidden="true">
      <path d="M11 10h2v2h-2zM8 13h2v2H8zM11 13h2v2h-2zM5 16h2v2H5zM8 16h2v2H8zM11 16h2v2h-2z" fill="#b5b2b1" />
    </svg>
  </footer>
);

export default function App() {
  return (
    <div className="h-screen overflow-hidden rounded-t-[6px] border border-black bg-[#b9d1ea]">
      <div className={`flex h-full flex-col overflow-hidden border-x border-b border-l-[#e4eef8] border-r-[#35c8e0] border-b-[#20c4dc] px-[6px] pb-[7px] text-black ${CHROME_FONT}`}>
        <TitleBar />
        <div className="shrink-0 bg-[#d4d9ee]">
          <MenuBar />
          <NavBar />
          <Bookmarks />
          <BrowserTabs />
        </div>
        <AppHeader />
        <main className={`flex min-h-0 flex-1 flex-col bg-linear-to-b from-white to-[#cbcbcb] px-[16px] pt-[15px] pb-[16px] ${APP_FONT}`}>
          <div className="flex min-h-0 flex-1 flex-col shadow-[0_0_6px_#777]">
            <DashboardTabs />
            <Gallery />
            <Workspace />
          </div>
        </main>
        <StatusBar />
      </div>
    </div>
  );
}
